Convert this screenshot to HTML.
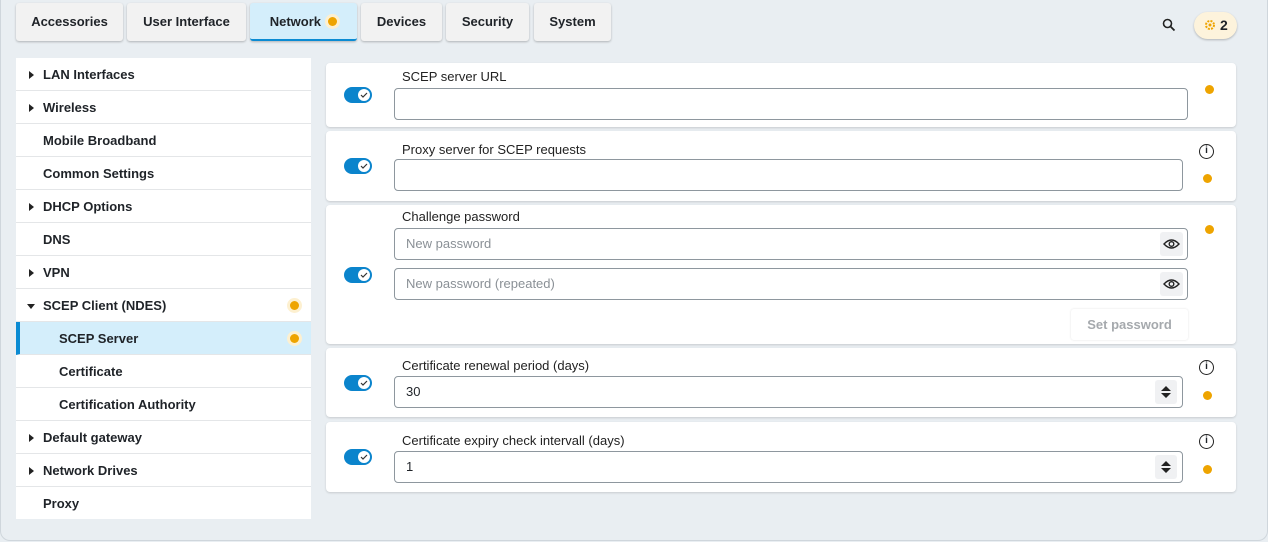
<!DOCTYPE html>
<html><head><meta charset="utf-8"><style>
*{box-sizing:border-box;margin:0;padding:0}
body{width:1268px;height:542px;background:#e9eef2;font-family:"Liberation Sans",sans-serif;color:#1f2328;position:relative;overflow:hidden}
.frame{position:absolute;left:0;top:0;width:1268px;height:541px;border:1px solid #cfd6dc;border-radius:0 0 10px 10px;border-top:none}
.tab{position:absolute;top:3px;height:38px;background:#f2f2f2;border-radius:3px;box-shadow:0 1px 2px rgba(0,0,0,.25);font-weight:bold;font-size:13px;line-height:38px;text-align:center}
.tab.act{background:#d4eefb;border-bottom:2px solid #0b8bd3}
.dot{display:inline-block;width:9px;height:9px;border-radius:50%;background:#eea400;box-shadow:0 0 0 3px #fdf0d0}
.side{position:absolute;left:16px;top:58px;width:295px;height:461px;background:#fff}
.row{height:33px;border-bottom:1px solid #e4e6e8;font-weight:bold;font-size:13px;line-height:34px;padding-left:27px;position:relative}
.row.sub{padding-left:43px}
.row.sel{background:#d4eefb;border-left:4px solid #0b8bd3;padding-left:39px}
.tri{position:absolute;left:13px;top:13px;width:0;height:0;border-top:4px solid transparent;border-bottom:4px solid transparent;border-left:5px solid #222}
.tri.d{left:11px;top:15px;border-left:4px solid transparent;border-right:4px solid transparent;border-top:5px solid #222;border-bottom:none}
.row .dot{position:absolute;right:12px;top:12px}
.card{position:absolute;left:326px;width:910px;background:#fff;border-radius:4px;box-shadow:0 1px 2px rgba(0,0,0,.15)}
.lbl{position:absolute;left:76px;font-size:13px;color:#222}
.inp{position:absolute;left:68px;height:32px;border:1px solid #8e979e;border-radius:4px;font-size:13px;line-height:30px;padding-left:11px}
.ph{color:#8a9096}
.tog{position:absolute;left:18px;width:28px;height:16px;border-radius:8px;background:#0b84cc}
.tog::after{content:"";position:absolute;right:2px;top:2px;width:12px;height:12px;border-radius:50%;background:#fff}
.tog svg{position:absolute;right:4px;top:5px;z-index:1}
.cd{position:absolute}
.info{position:absolute;width:15px;height:15px;border:1.5px solid #222;border-radius:50%;font-size:10px;font-weight:bold;text-align:center;line-height:12px}
.eye{position:absolute;right:4px;top:3px;width:23px;height:24px;background:#f0f1f3;border-radius:3px}
.spin{position:absolute;right:5px;top:3px;width:22px;height:24px;background:#f0f1f3;border-radius:3px}
</style></head><body>
<div class="frame"></div>
<div class="tab" style="left:16px;width:107px">Accessories</div>
<div class="tab" style="left:127px;width:119px">User Interface</div>
<div class="tab act" style="left:250px;width:107px">Network &nbsp;<span class="dot" style="vertical-align:0"></span></div>
<div class="tab" style="left:361px;width:81px">Devices</div>
<div class="tab" style="left:446px;width:83px">Security</div>
<div class="tab" style="left:534px;width:77px">System</div>
<svg style="position:absolute;left:1162px;top:18px" width="14" height="14" viewBox="0 0 14 14"><circle cx="5.5" cy="5.5" r="4" fill="none" stroke="#222" stroke-width="1.6"/><path d="M8.5 8.5L12.5 12.5" stroke="#222" stroke-width="1.8"/></svg>
<div style="position:absolute;left:1194px;top:12px;width:43px;height:27px;border-radius:14px;background:#fdf3dc;box-shadow:0 1px 2px rgba(0,0,0,.25);font-weight:bold;font-size:14px;line-height:27px;padding-left:26px">2</div>
<svg style="position:absolute;left:1204px;top:19px" width="12" height="12" viewBox="0 0 12 12"><circle cx="6" cy="6" r="4" fill="none" stroke="#eea400" stroke-width="2" stroke-dasharray="2 1.2"/><circle cx="6" cy="6" r="1.5" fill="#eea400"/></svg>

<div class="side">
<div class="row"><span class="tri"></span>LAN Interfaces</div>
<div class="row"><span class="tri"></span>Wireless</div>
<div class="row">Mobile Broadband</div>
<div class="row">Common Settings</div>
<div class="row"><span class="tri"></span>DHCP Options</div>
<div class="row">DNS</div>
<div class="row"><span class="tri"></span>VPN</div>
<div class="row"><span class="tri d"></span>SCEP Client (NDES)<span class="dot"></span></div>
<div class="row sel">SCEP Server<span class="dot"></span></div>
<div class="row sub">Certificate</div>
<div class="row sub">Certification Authority</div>
<div class="row"><span class="tri"></span>Default gateway</div>
<div class="row"><span class="tri"></span>Network Drives</div>
<div class="row" style="border:none">Proxy</div>
</div>

<svg width="0" height="0" style="position:absolute"><defs><symbol id="ck" viewBox="0 0 8 6"><path d="M1 3l2 2 4-4" fill="none" stroke="#333" stroke-width="1.2"/></symbol></defs></svg>

<div class="card" style="top:63px;height:64px">
<div class="tog" style="top:24px"><svg width="8" height="6"><use href="#ck"/></svg></div>
<div class="lbl" style="top:6px">SCEP server URL</div>
<div class="inp" style="top:25px;width:794px"></div>
<span class="dot cd" style="left:879px;top:22px;box-shadow:none"></span>
</div>

<div class="card" style="top:131px;height:70px">
<div class="tog" style="top:27px"><svg width="8" height="6"><use href="#ck"/></svg></div>
<div class="lbl" style="top:11px">Proxy server for SCEP requests</div>
<div class="inp" style="top:28px;width:789px"></div>
<div class="info" style="left:873px;top:13px">i</div>
<span class="dot cd" style="left:877px;top:43px;box-shadow:none"></span>
</div>

<div class="card" style="top:205px;height:139px">
<div class="tog" style="top:62px"><svg width="8" height="6"><use href="#ck"/></svg></div>
<div class="lbl" style="top:4px">Challenge password</div>
<div class="inp ph" style="top:23px;width:794px">New password<div class="eye"><svg style="margin:6px 3px" width="17" height="12" viewBox="0 0 17 12"><path d="M1 6Q8.5-2 16 6Q8.5 14 1 6Z" fill="none" stroke="#222" stroke-width="1.4"/><circle cx="8.5" cy="6" r="2.3" fill="none" stroke="#222" stroke-width="1.4"/></svg></div></div>
<div class="inp ph" style="top:63px;width:794px">New password (repeated)<div class="eye"><svg style="margin:6px 3px" width="17" height="12" viewBox="0 0 17 12"><path d="M1 6Q8.5-2 16 6Q8.5 14 1 6Z" fill="none" stroke="#222" stroke-width="1.4"/><circle cx="8.5" cy="6" r="2.3" fill="none" stroke="#222" stroke-width="1.4"/></svg></div></div>
<div style="position:absolute;left:745px;top:104px;width:117px;height:31px;border-radius:3px;box-shadow:0 0 2px rgba(0,0,0,.12);font-weight:bold;font-size:13px;color:#a5a9ad;text-align:center;line-height:31px">Set password</div>
<span class="dot cd" style="left:879px;top:20px;box-shadow:none"></span>
</div>

<div class="card" style="top:348px;height:69px">
<div class="tog" style="top:27px"><svg width="8" height="6"><use href="#ck"/></svg></div>
<div class="lbl" style="top:10px">Certificate renewal period (days)</div>
<div class="inp" style="top:28px;width:789px">30<div class="spin"><svg style="margin:5px 5px" width="12" height="14" viewBox="0 0 12 14"><path d="M1 6L6 1L11 6Z M1 8L11 8L6 13Z" fill="#222"/></svg></div></div>
<div class="info" style="left:873px;top:12px">i</div>
<span class="dot cd" style="left:877px;top:43px;box-shadow:none"></span>
</div>

<div class="card" style="top:422px;height:70px">
<div class="tog" style="top:27px"><svg width="8" height="6"><use href="#ck"/></svg></div>
<div class="lbl" style="top:11px">Certificate expiry check intervall (days)</div>
<div class="inp" style="top:29px;width:789px">1<div class="spin"><svg style="margin:5px 5px" width="12" height="14" viewBox="0 0 12 14"><path d="M1 6L6 1L11 6Z M1 8L11 8L6 13Z" fill="#222"/></svg></div></div>
<div class="info" style="left:873px;top:12px">i</div>
<span class="dot cd" style="left:877px;top:43px;box-shadow:none"></span>
</div>
</body></html>
